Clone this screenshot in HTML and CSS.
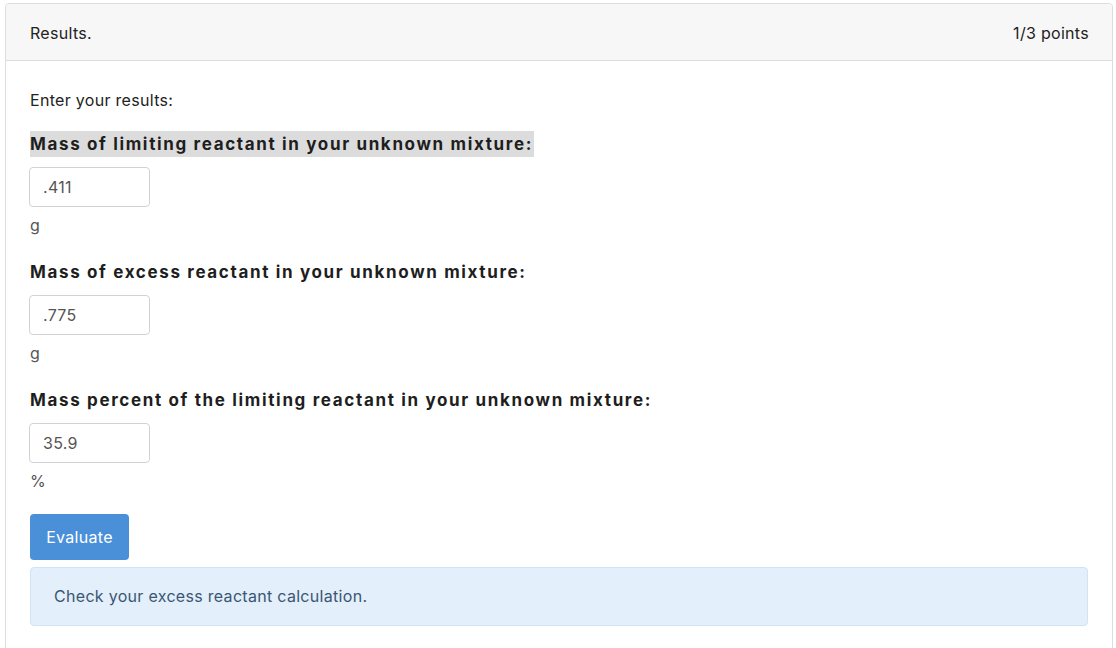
FILE: index.html
```html
<!DOCTYPE html>
<html>
<head>
<meta charset="utf-8">
<link rel="stylesheet" href="styles.css">
</head>
<body>
<div class="card">
  <div class="card-header">
    <span>Results.</span>
    <span>1/3 points</span>
  </div>
  <div class="card-body">
    <div class="intro">Enter your results:</div>
    <div class="field">
      <div class="label"><span class="hl">Mass of limiting reactant in your unknown mixture:</span></div>
      <div class="input">.411</div>
      <div class="unit">g</div>
    </div>
    <div class="field">
      <div class="label"><span>Mass of excess reactant in your unknown mixture:</span></div>
      <div class="input">.775</div>
      <div class="unit">g</div>
    </div>
    <div class="field field-last">
      <div class="label"><span>Mass percent of the limiting reactant in your unknown mixture:</span></div>
      <div class="input">35.9</div>
      <div class="unit">%</div>
    </div>
    <button class="btn">Evaluate</button>
    <div class="alert">Check your excess reactant calculation.</div>
  </div>
</div>
</body>
</html>
```
FILE: styles.css
```css
html, body {
  margin: 0;
  padding: 0;
  background: #fff;
  height: 648px;
  overflow: hidden;
}
body {
  font-family: "Inter", "Noto Sans", sans-serif;
  font-size: 16px;
  letter-spacing: 0.3px;
  color: #222;
}
.card {
  margin: 3px 0 0 5px;
  width: 1106px;
  height: 660px;
  border: 1px solid #dddddd;
  border-radius: 4px;
}
.card-header {
  display: flex;
  justify-content: space-between;
  align-items: center;
  height: 56px;
  padding: 0 23px 0 24px;
  background: #f7f7f7;
  border-bottom: 1px solid #dddddd;
  line-height: 24px;
  border-radius: 4px 4px 0 0;
}
.card-header span {
  padding-top: 2px;
}
.card-body {
  padding: 27px 24px 0 24px;
  display: flex;
  flex-direction: column;
  align-items: flex-start;
}
.intro {
  line-height: 24px;
  margin-bottom: 19px;
}
.field {
  display: flex;
  flex-direction: column;
  align-items: flex-start;
  margin-bottom: 24px;
}
.field-last {
  margin-bottom: 23px;
}
.label {
  font-size: 17px;
  font-weight: 700;
  letter-spacing: 1.65px;
  line-height: 26px;
  height: 26px;
  color: #1e1e1e;
}
.label .hl {
  background: #dcdcdc;
  display: inline-block;
  padding-right: 1px;
}
.input {
  margin-top: 10px;
  border: 1px solid #cfd3d7;
  border-radius: 4px;
  padding: 0 0 0 13px;
  box-sizing: border-box;
  width: 121px;
  height: 40px;
  line-height: 38px;
  color: #555;
  margin-left: -1px;
}
.unit {
  margin-top: 8px;
  line-height: 20px;
  height: 20px;
  color: #555;
}
.btn {
  font-family: inherit;
  font-size: 16px;
  letter-spacing: 0.3px;
  color: #fff;
  background: #4a90d9;
  border: none;
  border-radius: 4px;
  width: 99px;
  height: 46px;
  padding: 0;
  line-height: 46px;
}
.alert {
  margin-top: 7px;
  align-self: stretch;
  box-sizing: border-box;
  height: 59px;
  background: #e3effa;
  border: 1px solid #d1e3f5;
  border-radius: 4px;
  padding: 0 23px;
  line-height: 57px;
  color: #3a5673;
}
```
